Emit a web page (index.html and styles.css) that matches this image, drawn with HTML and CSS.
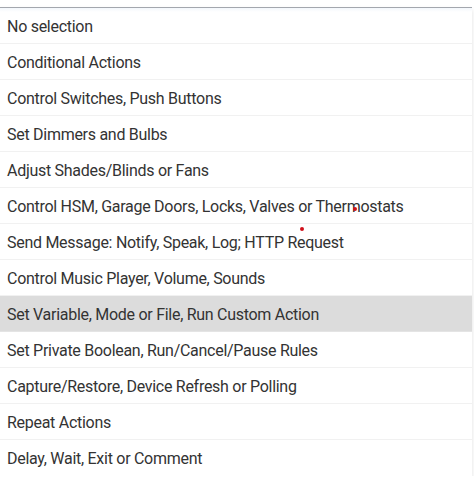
FILE: index.html
```html
<!DOCTYPE html>
<html lang="en">
<head>
    <meta charset="UTF-8">
    <title>Select Action Type</title>
    <link rel="stylesheet" href="styles.css">
</head>
<body>
    <div class="dropdown">
        <ul class="option-list">
            <li class="option">No selection</li>
            <li class="option">Conditional Actions</li>
            <li class="option">Control Switches, Push Buttons</li>
            <li class="option">Set Dimmers and Bulbs</li>
            <li class="option">Adjust Shades/Blinds or Fans</li>
            <li class="option">Control HSM, Garage Doors, Locks, Valves or Thermostats</li>
            <li class="option">Send Message: Notify, Speak, Log; HTTP Request</li>
            <li class="option">Control Music Player, Volume, Sounds</li>
            <li class="option highlighted">Set Variable, Mode or File, Run Custom Action</li>
            <li class="option">Set Private Boolean, Run/Cancel/Pause Rules</li>
            <li class="option">Capture/Restore, Device Refresh or Polling</li>
            <li class="option">Repeat Actions</li>
            <li class="option">Delay, Wait, Exit or Comment</li>
        </ul>
        <!-- stray touch markers from the screenshot -->
        <span class="dot dot-a"></span>
        <span class="dot dot-b"></span>
    </div>
</body>
</html>
```

FILE: styles.css
```css
body {
    margin: 0;
    background: #fff;
    font-family: Roboto, "Liberation Sans", sans-serif;
}

.dropdown {
    position: relative;
    width: 472px;
    margin-top: 7px;
    border-top: 1px solid #a3a7ae;
    background: #fff;
    box-shadow: 0 3px 5px rgba(0, 0, 0, 0.12);
}

.option-list {
    list-style: none;
    margin: 0;
    padding: 0;
}

.option {
    box-sizing: border-box;
    height: 36px;
    padding: 1px 7px 0;
    display: flex;
    align-items: center;
    font-size: 16px;
    letter-spacing: -0.28px;
    color: #333;
    border-bottom: 1px solid #f1f1f1;
    white-space: nowrap;
}

.option:first-child {
    background: linear-gradient(#f3f7fc, #fff 4px);
}

.option:last-child {
    border-bottom: none;
}

.option.highlighted {
    background: #dcdcdc;
    border-bottom-color: #e4e4e4;
}

.dot {
    position: absolute;
    width: 4px;
    height: 4px;
    border-radius: 50%;
    background: #d0101a;
}

.dot-a {
    left: 353px;
    top: 199px;
}

.dot-b {
    left: 300px;
    top: 219px;
}
```
